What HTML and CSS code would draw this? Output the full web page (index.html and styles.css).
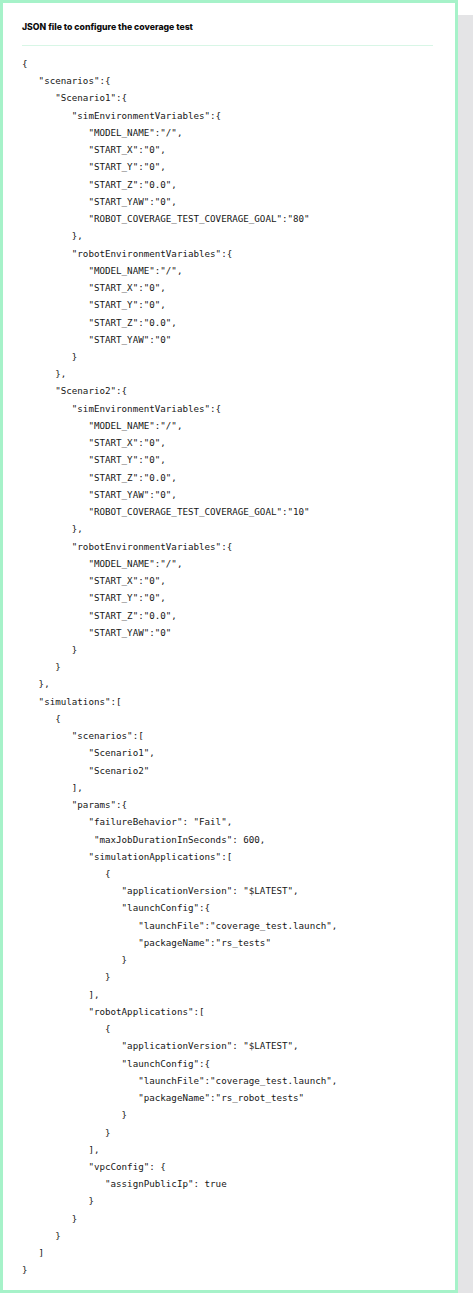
FILE: index.html
```html
<!DOCTYPE html>
<html>
<head>
<meta charset="utf-8">
<link rel="stylesheet" href="styles.css">
</head>
<body>
<div class="card">
  <div class="title">JSON file to configure the coverage test</div>
  <div class="divider"></div>
<pre class="code">{
   "scenarios":{
      "Scenario1":{
         "simEnvironmentVariables":{
            "MODEL_NAME":"/",
            "START_X":"0",
            "START_Y":"0",
            "START_Z":"0.0",
            "START_YAW":"0",
            "ROBOT_COVERAGE_TEST_COVERAGE_GOAL":"80"
         },
         "robotEnvironmentVariables":{
            "MODEL_NAME":"/",
            "START_X":"0",
            "START_Y":"0",
            "START_Z":"0.0",
            "START_YAW":"0"
         }
      },
      "Scenario2":{
         "simEnvironmentVariables":{
            "MODEL_NAME":"/",
            "START_X":"0",
            "START_Y":"0",
            "START_Z":"0.0",
            "START_YAW":"0",
            "ROBOT_COVERAGE_TEST_COVERAGE_GOAL":"10"
         },
         "robotEnvironmentVariables":{
            "MODEL_NAME":"/",
            "START_X":"0",
            "START_Y":"0",
            "START_Z":"0.0",
            "START_YAW":"0"
         }
      }
   },
   "simulations":[
      {
         "scenarios":[
            "Scenario1",
            "Scenario2"
         ],
         "params":{
            "failureBehavior": "Fail",
             "maxJobDurationInSeconds": 600,
            "simulationApplications":[
               {
                  "applicationVersion": "$LATEST",
                  "launchConfig":{
                     "launchFile":"coverage_test.launch",
                     "packageName":"rs_tests"
                  }
               }
            ],
            "robotApplications":[
               {
                  "applicationVersion": "$LATEST",
                  "launchConfig":{
                     "launchFile":"coverage_test.launch",
                     "packageName":"rs_robot_tests"
                  }
               }
            ],
            "vpcConfig": {
               "assignPublicIp": true
            }
         }
      }
   ]
}</pre>
</div>
</body>
</html>
```

FILE: styles.css
```css
html, body {
  margin: 0;
  padding: 0;
  background: #ffffff;
}
.card {
  width: 458px;
  box-sizing: border-box;
  border: 3px solid #a6f2c9;
  background: #ffffff;
  box-shadow: 15px 15px 0 #e4e4e6;
  padding: 17px 22px 11px 19px;
}
.title {
  font-family: "Inter", "Liberation Sans", sans-serif;
  font-weight: 800;
  font-size: 8.7px;
  line-height: 14px;
  color: #0c0c0c;
}
.divider {
  height: 1px;
  background: #d8f6e6;
  margin: 11px 0 9px 0;
}
.code {
  margin: 0;
  font-family: "DejaVu Sans Mono", monospace;
  font-size: 9.2px;
  line-height: 17.24px;
  color: #161616;
}
```
